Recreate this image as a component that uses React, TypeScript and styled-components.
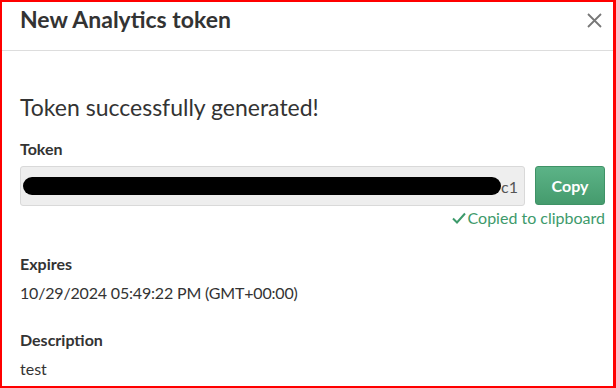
import React from "react";
import styled, { createGlobalStyle } from "styled-components";

const GlobalStyle = createGlobalStyle`
  html, body {
    margin: 0;
    padding: 0;
    background: #ffffff;
  }
  body {
    font-family: Lato, "Noto Sans", sans-serif;
    color: #333333;
  }
`;

const Frame = styled.div`
  box-sizing: border-box;
  width: 616px;
  height: 388px;
  border: 2px solid #ff0000;
  border-right-width: 3px;
  background: #ffffff;
  overflow: hidden;
  display: flex;
  flex-direction: column;
`;

const Header = styled.div`
  height: 48px;
  flex-shrink: 0;
  display: flex;
  align-items: center;
  justify-content: space-between;
  padding: 0 7px 0 18px;
  border-bottom: 1px solid #dddddd;
`;

const Title = styled.h1`
  margin: 0;
  font-size: 23px;
  font-weight: 700;
  color: #333333;
  line-height: 23px;
  padding-bottom: 14px;
`;

const CloseButton = styled.button`
  border: none;
  background: none;
  padding: 0;
  width: 24px;
  height: 24px;
  display: flex;
  align-items: center;
  justify-content: center;
  cursor: pointer;
  margin-bottom: 12px;
`;

const Body = styled.div`
  padding: 42px 8px 0 18px;
  display: flex;
  flex-direction: column;
`;

const Headline = styled.h2`
  margin: 0 0 18px;
  font-size: 23px;
  font-weight: 400;
  color: #333333;
  line-height: 28px;
`;

const Label = styled.div<{ $gap?: number }>`
  font-size: 16px;
  font-weight: 700;
  color: #333333;
  line-height: 20px;
  margin-bottom: ${(p) => p.$gap ?? 7}px;
`;

const TokenRow = styled.div`
  display: flex;
  align-items: flex-start;
  gap: 10px;
`;

const TokenField = styled.div`
  flex: 1;
  box-sizing: border-box;
  height: 40px;
  background: #eeeeee;
  border: 1px solid #d9d9d9;
  border-radius: 3px;
  display: flex;
  align-items: center;
  padding: 0 6px 0 2px;
  font-size: 16px;
  color: #555555;
`;

const Redaction = styled.span`
  flex: 1;
  height: 18px;
  background: #000000;
  border-radius: 9px;
`;

const CopyButton = styled.button`
  width: 70px;
  height: 39px;
  border: 1px solid #3f9266;
  border-radius: 3px;
  background: linear-gradient(#5cb387, #459b6d);
  color: #ffffff;
  font-family: Lato, "Noto Sans", sans-serif;
  font-size: 16px;
  font-weight: 700;
  cursor: pointer;
`;

const CopiedNote = styled.div`
  align-self: flex-end;
  display: flex;
  align-items: center;
  gap: 2px;
  margin-top: 2px;
  font-size: 16px;
  color: #3d9a6b;
  line-height: 20px;
`;

const Section = styled.div<{ $top: number }>`
  margin-top: ${(p) => p.$top}px;
`;

const Value = styled.div<{ $tight?: boolean }>`
  font-size: 16px;
  color: #333333;
  line-height: 20px;
  letter-spacing: ${(p) => (p.$tight ? "-0.18px" : "normal")};
`;

export default function App() {
  return (
    <>
      <GlobalStyle />
      <Frame>
        <Header>
          <Title>New Analytics token</Title>
          <CloseButton aria-label="Close">
            <svg width="15" height="15" viewBox="0 0 15 15">
              <path d="M1 1 L14 14 M14 1 L1 14" stroke="#777777" strokeWidth="1.8" />
            </svg>
          </CloseButton>
        </Header>
        <Body>
          <Headline>Token successfully generated!</Headline>
          <Label>Token</Label>
          <TokenRow>
            <TokenField>
              <Redaction />
              c1
            </TokenField>
            <CopyButton>Copy</CopyButton>
          </TokenRow>
          <CopiedNote>
            <svg width="14" height="12" viewBox="0 0 14 12">
              <path d="M1 6.5 L5 10.5 L13 1.5" stroke="#3d9a6b" strokeWidth="2" fill="none" />
            </svg>
            Copied to clipboard
          </CopiedNote>
          <Section $top={26}>
            <Label $gap={9}>Expires</Label>
            <Value $tight>10/29/2024 05:49:22 PM (GMT+00:00)</Value>
          </Section>
          <Section $top={27}>
            <Label $gap={9}>Description</Label>
            <Value>test</Value>
          </Section>
        </Body>
      </Frame>
    </>
  );
}
